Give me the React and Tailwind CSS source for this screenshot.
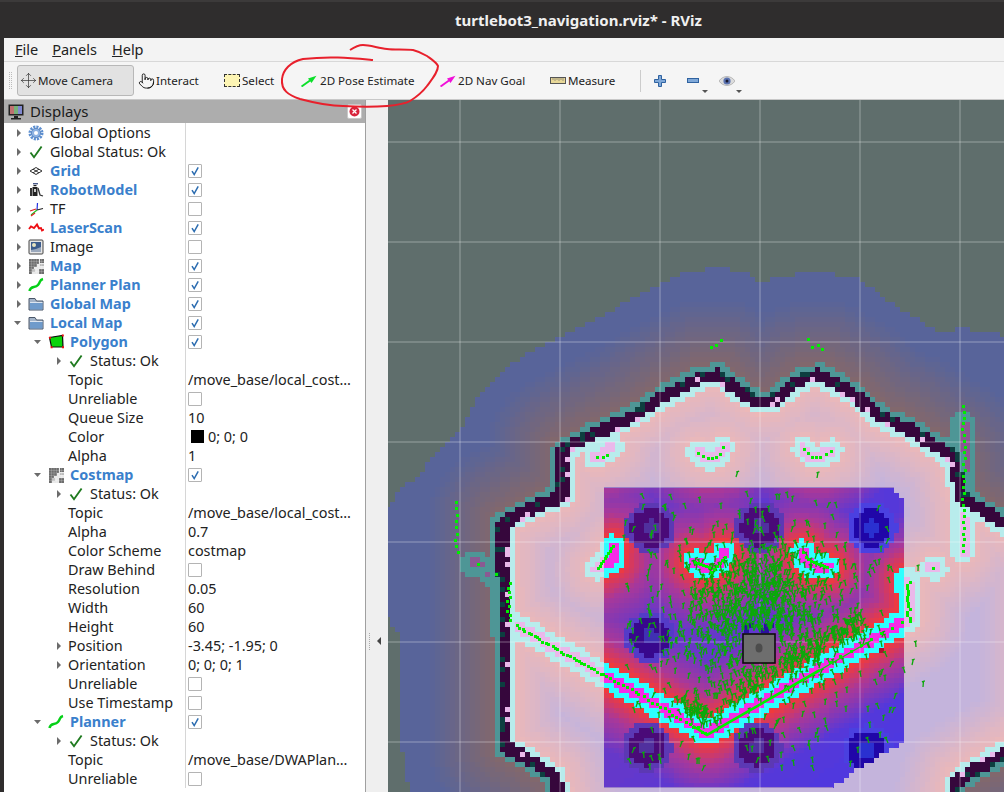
import React from "react";
import { Pointer, Move } from "lucide-react";

/* ---------- costmap drawing helpers ---------- */
const segD = (px, py, a, b) => {
  const dx = b[0] - a[0], dy = b[1] - a[1];
  const l = dx * dx + dy * dy;
  let t = l ? ((px - a[0]) * dx + (py - a[1]) * dy) / l : 0;
  t = Math.max(0, Math.min(1, t));
  return Math.hypot(px - a[0] - t * dx, py - a[1] - t * dy);
};
const lineD = (px, py, lines) => {
  let m = 1e9;
  for (const pl of lines) {
    if (pl.length === 1) m = Math.min(m, Math.hypot(px - pl[0][0], py - pl[0][1]));
    for (let i = 0; i + 1 < pl.length; i++) m = Math.min(m, segD(px, py, pl[i], pl[i + 1]));
  }
  return m;
};
const inPoly = (x, y, p) => {
  let c = false;
  for (let i = 0, j = p.length - 1; i < p.length; j = i++) {
    if (p[i][1] > y !== p[j][1] > y && x < ((p[j][0] - p[i][0]) * (y - p[i][1])) / (p[j][1] - p[i][1]) + p[i][0]) c = !c;
  }
  return c;
};
const hex = (h) => [1, 3, 5].map((i) => parseInt(h.slice(i, i + 2), 16));
const mix = (a, b, t) => {
  const A = hex(a), B = hex(b);
  const q = Math.round(Math.max(0, Math.min(1, t)) * 14) / 14;
  return "#" + A.map((v, i) => Math.round(v + (B[i] - v) * q).toString(16).padStart(2, "0")).join("");
};
const hash = (x, y) => {
  const s = Math.sin(x * 12.9898 + y * 78.233) * 43758.5453;
  return s - Math.floor(s);
};

const halo = [[388,505],[398,493],[421,472],[445,443],[461,430],[470,412],[480,393],[500,372],[529,352],[560,337],[600,317],[645,292],[685,272],[717,268],[749,272],[759,282],[781,277],[810,272],[824,273],[856,277],[891,302],[914,317],[940,332],[962,328],[995,333],[1004,337],[1100,400],[1100,830],[412,830],[410,785],[405,782],[405,755],[400,752],[400,632],[392,625],[388,617],[370,600],[370,540]];
const wallTop = [[558,792],[555,777],[525,757],[505,747],[503,523],[528,510],[545,502],[563,497],[563,450],[592,435],[632,417],[663,397],[702,377],[718,375],[734,387],[759,403],[771,402],[800,380],[820,375],[852,393],[880,417],[907,428],[930,443],[952,455],[962,498],[1004,523],[1040,545],[1040,730],[1004,753],[980,767],[958,780],[955,792]];
const room = [...wallTop, [945,840],[575,840]];
const walls = [[[575,840],[558,792]], wallTop, [[955,792],[945,840]]];
const obst = [
  [[596,457],[612,448]],
  [[698,453],[708,458],[716,457],[723,447]],
  [[804,449],[812,457],[820,457],[831,451]],
  [[473,564],[478,564]], [[492,574],[495,574]],
  [[963,425],[963,552]],
  [[931,568],[936,568]],
  [[613,547],[612,560],[597,568]],
  [[695,562],[705,568],[718,564],[724,553]],
  [[803,552],[808,565],[827,567]],
  [[907,580],[910,600],[909,620]],
  [[515,625],[707,733],[905,621]],
];
const posts = [[650,528,0],[760,527,0],[872,528,1],[650,637,.4],[647,747,0],[757,747,0],[867,750,1]];

const inLocal = (x, y) => {
  if (x < 604 || x >= 904 || y < 488 || y >= 787) return false;
  if (x > 894 && y < 493) return false;
  if (x > 899 && y < 498) return false;
  if (y > 742 && y < 772 && x > 904 - (y - 742) * 1.7) return false;
  if (y >= 772 && x > 853 - (y - 772) * 1.33) return false;
  return true;
};

const globalColor = (x, y) => {
  if (!inPoly(x, y, halo)) return null;
  const dw = lineD(x, y, walls), dob = lineD(x, y, obst), ins = inPoly(x, y, room), h = hash(x, y);
  if (dw < 6) {
    if (!ins && h < 0.22) return "#0d3f40";
    if (ins && h < 0.12) return "#eab8ea";
    return "#36073c";
  }
  if (dw < 11.5) return ins ? "#b8ecec" : "#4e9696";
  if (dob < 5.5) return ins ? "#eab8ea" : "#8a5a92";
  if (dob < 12) return ins ? "#b8ecec" : "#4e9696";
  if (ins) return mix("#ecb8b8", "#c4b4dc", (Math.min(dw, dob) - 10) / 50);
  return mix("#84686a", "#58649a", (dw - 8) / 70);
};

const localColor = (x, y) => {
  const d = lineD(x, y, obst);
  if (d < 5) return "#f52ce6";
  if (d < 12) return "#2effff";
  if (x > 866 && x < 882 && y > 628 && y < 652) return "#b0102c";
  if (y > 623 && y < 633 && x > 745 && x < 775 && hash(x, y) < 0.5) return "#2a10a0";
  for (const [px, py, b] of posts) {
    const r = Math.hypot(x - px, y - py);
    if (r < 8) return mix("#50309e", "#2a30d0", b);
    if (r < 19) return mix("#4a0a78", "#2006a8", b);
    if (r < 25) return mix("#5c38b4", "#4a40e0", b);
  }
  const base = mix("#7038c0", "#4e38e0", (x - 604) / 300 * 0.8 + Math.max(0, y - 680) / 300);
  if (d < 34) return mix("#f03a3c", "#a8389a", (d - 12) / 22);
  return mix("#a8389a", base, (d - 34) / 30);
};

const buildCells = () => {
  const groups = {};
  const add = (c, x, y, w, h) => {
    groups[c] = (groups[c] || "") + `M${x} ${y}h${w}v${h}h${-w}z`;
  };
  for (let y = 97; y < 795; y += 5) {
    for (let x = 385; x < 1005; x += 5) {
      const c = globalColor(x + 2.5, y + 2.5);
      if (c) add(c, x, y, 5, 5);
    }
  }
  for (let y = 488; y < 787; y += 5) {
    for (let x = 604; x < 904; x += 5) {
      if (inLocal(x + 2.5, y + 2.5)) add(localColor(x + 2.5, y + 2.5), x, y, 5, 5);
    }
  }
  return Object.entries(groups);
};

const buildParticles = () => {
  let s = 12345;
  const r = () => ((s = (s * 1664525 + 1013904223) >>> 0) / 4294967296);
  const g = () => (r() + r() + r() + r() - 2) * 1.22;
  const pts = [];
  for (let i = 0; i < 800; i++) pts.push([757 + g() * 58, 605 + g() * 46]);
  for (let i = 0; i < 260; i++) pts.push([760 + g() * 80, 645 + g() * 50]);
  for (let i = 0; i < 220; i++) { const t = r(); pts.push([715 + 150 * t + g() * 6, 722 - 85 * t - 14 + g() * 12]); }
  for (let i = 0; i < 70; i++) { const t = r(); pts.push([680 + 30 * t + g() * 8, 700 + 25 * t + g() * 6]); }
  for (let i = 0; i < 210; i++) pts.push([625 + r() * 265, 495 + r() * 280]);
  pts.push([736,477],[817,478],[916,647],[912,665],[905,673],[923,687],[894,699],[893,572],[918,571],[700,503],[748,497]);
  let d = "";
  for (const [x, y] of pts) {
    if (x > 740 && x < 778 && y > 632 && y < 666) continue;
    const a = (r() - 0.5) * 0.9;
    const dx = Math.sin(a) * 6, dy = -Math.cos(a) * 6;
    const X = Math.round(x), Y = Math.round(y);
    d += `M${X} ${Y}l${dx.toFixed(1)} ${dy.toFixed(1)}m-1.6 .8l3 -1`;
  }
  return d;
};

const buildDots = () => {
  let s = 99;
  const r = () => ((s = (s * 1664525 + 1013904223) >>> 0) / 4294967296);
  const pts = [[711,347],[716,345],[721,340],[808,339],[812,347],[818,345],[822,349],[478,564],[496,574],[597,457],[603,457],[607,455],[698,453],[703,456],[708,458],[712,458],[716,457],[720,454],[723,447],[804,449],[808,453],[812,457],[816,457],[820,457],[826,454],[831,451],[933,568]];
  for (let i = 0; i < 9; i++) pts.push([455 + r() * 3, 502 + i * 6.3]);
  for (let i = 0; i < 26; i++) pts.push([962 + r() * 3, 406 + i * 5.8]);
  for (let i = 0; i < 9; i++) pts.push([507 + r() * 3, 583 + i * 4.6]);
  for (let i = 0; i <= 30; i++) { const t = i / 30; pts.push([515 + 90 * t + r() * 2, 625 + 50 * t + r() * 2]); }
  for (let i = 0; i < 10; i++) { const t = i / 9; pts.push([613 - 15 * t, 546 + 22 * t]); }
  for (let i = 0; i < 14; i++) pts.push([906 + r() * 4, 582 + i * 3]);
  for (let i = 0; i <= 24; i++) { const t = i / 24; pts.push([605 + 100 * t + r() * 2, 675 + 57 * t + r() * 2]); }
  for (let i = 0; i < 12; i++) { const t = i / 11; pts.push([695 + 30 * t, 562 + (t < .5 ? 12 * t : 12 - 34 * (t - .5)) ]); }
  for (let i = 0; i < 10; i++) { const t = i / 9; pts.push([803 + 24 * t, 552 + 15 * Math.sqrt(t)]); }
  for (let i = 0; i < 8; i++) { const t = i / 7; pts.push([830 + 72 * t, 662 - 40 * t]); }
  return pts;
};

const cells = buildCells();
const particles = buildParticles();
const dots = buildDots();

const Canvas = () => (
  <svg viewBox="388 100 616 692" className="block w-[616px] h-[692px] shrink-0">
    <rect x="388" y="100" width="616" height="692" fill="#5f6e6c" />
    <g shapeRendering="crispEdges">
      {cells.map(([c, d]) => <path key={c} d={d} fill={c} />)}
      <rect x="604" y="487" width="290" height="1" fill="#9a80c8" />
      <rect x="604" y="787" width="229" height="1" fill="#9a80c8" />
    </g>
    <g stroke="#ffffff" strokeOpacity=".18" strokeWidth="2" shapeRendering="crispEdges">
      {[460, 560, 660, 760, 860, 960].map((x) => <line key={x} x1={x} x2={x} y1="100" y2="792" />)}
      {[142, 242, 342, 442, 542, 642, 742].map((y) => <line key={y} y1={y} y2={y} x1="388" x2="1004" />)}
    </g>
    <path d={particles} fill="none" stroke="#0aa80a" strokeWidth="1.3" />
    <path d="M693 726L707 735L820 670" fill="none" stroke="#00f000" strokeWidth="2.6" />
    <path d="M820 670L872 640" fill="none" stroke="#00e000" strokeWidth="1.4" />
    <g fill="#00ee00" shapeRendering="crispEdges">
      {dots.map(([x, y], i) => <rect key={i} x={Math.round(x) - 1} y={Math.round(y) - 1} width="3" height="3" />)}
    </g>
    <rect x="743" y="634" width="32" height="29" fill="#6e6e6e" stroke="#0c0c0c" strokeWidth="1.6" />
    <ellipse cx="759" cy="648" rx="3.5" ry="4.5" fill="#4c4c4c" />
  </svg>
);

/* ---------- tree icons ---------- */
const S = ({ children, c = "" }) => (
  <svg viewBox="0 0 16 16" className={`w-4 h-4 shrink-0 ${c}`}>{children}</svg>
);
const Gear = () => (
  <S>
    <circle cx="8" cy="8" r="6" fill="none" stroke="#5d8fd0" strokeWidth="3" strokeDasharray="2.1 1" />
    <circle cx="8" cy="8" r="4.6" fill="#8db2e2" stroke="#4c7cbc" strokeWidth=".8" />
    <circle cx="8" cy="8" r="2" fill="#fff" />
  </S>
);
const Check = () => (
  <svg viewBox="0 0 14 14" className="w-[14px] h-[14px] shrink-0">
    <path d="M1.5 7.5L5 12.2L12.6 1.5" fill="none" stroke="#1f7a1f" strokeWidth="1.9" />
  </svg>
);
const GridI = () => (
  <S><path d="M8 4.5L14 8L8 11.5L2 8Z M5 6.2L11 9.8M11 6.2L5 9.8" fill="#fff" stroke="#333" strokeWidth="1" /></S>
);
const Robot = () => (
  <S>
    <rect x="5" y="1" width="5" height="1.4" fill="#4a5a8a" />
    <rect x="5.5" y="3" width="3" height="1.2" fill="#222" />
    <rect x="2" y="6" width="2" height="8" fill="#333" />
    <rect x="4.5" y="5" width="5" height="9" fill="#222" />
    <rect x="6" y="7" width="2" height="3" fill="#ccc" />
    <path d="M10 6L12 13L15 14" fill="none" stroke="#333" strokeWidth="1.3" />
  </S>
);
const TF = () => (
  <S>
    <path d="M9 9L9.5 2" stroke="#2030e0" strokeWidth="1.2" />
    <path d="M9 9L15 7.5" stroke="#222" strokeWidth="1.2" />
    <path d="M9 9L3 14" stroke="#20c020" strokeWidth="1.2" />
    <path d="M8 8L2 10" stroke="#e02020" strokeWidth="1.2" />
    <path d="M3 15L7 12" stroke="#e02020" strokeWidth="1.2" />
  </S>
);
const Laser = () => (
  <S><path d="M1 9L3 6.5L6 8L9 4.5L11 8.5L13 8L14 10.5L16 9.5" fill="none" stroke="#ee0f14" strokeWidth="1.9" /></S>
);
const ImageI = () => (
  <S>
    <rect x="1" y="1" width="14" height="14" rx="1" fill="#e6e6e6" stroke="#444" />
    <rect x="3" y="3" width="10" height="10" fill="#3c5c8c" />
    <circle cx="6" cy="6" r="2" fill="#e8e4c0" />
    <path d="M3 13L3 11L8 10L13 8V13Z" fill="#9aa8bc" />
  </S>
);
const MapI = () => (
  <S>
    <rect x="1" y="1" width="15" height="15" fill="#e8e8e8" />
    <path d="M1 1h5v5h-5zM6 1h5v5h-5zM1 6h5v5h-5zM6 6h3v3h-3zM1 11h3v5h-3zM12 1h4v4h-4zM11 11h5v5h-5z" fill="#6e6e6e" />
    <path d="M12 6h4v2h-4zM4 11h3v3h-3z" fill="#bdbdbd" />
    <path d="M3.5 1v15M6 1v15M8.5 1v15M11 1v15M13.5 1v15M1 3.5h15M1 6h15M1 8.5h15M1 11h15M1 13.5h15" stroke="#fff" strokeOpacity=".45" strokeWidth=".4" />
  </S>
);
const Plan = () => (
  <S><path d="M1.5 14C2.5 8 7 11.5 10 8S11 3 15 2" fill="none" stroke="#06d018" strokeWidth="2.5" /></S>
);
const Folder = () => (
  <S>
    <path d="M1 14V2.5h6L8.5 5H15V14Z" fill="#a4b4c8" stroke="#4a5668" strokeWidth="1" />
    <rect x="2" y="6.5" width="12.5" height="7" fill="#6f9bcb" />
    <rect x="2" y="6" width="12.5" height="1" fill="#dde6f0" />
  </S>
);
const PolyI = () => (
  <S>
    <path d="M1.5 3.5L14.5 1.5L15 13L3.5 13Z" fill="#0ad40a" stroke="#0a0a0a" strokeWidth="1.2" />
    <path d="M1 2.8h2v2h-2zM13.8 .6h2v2h-2zM14 12.2h2v2h-2zM2.6 12.2h2v2h-2z" fill="#f01010" />
  </S>
);

const icons = { gear: Gear, check: Check, grid: GridI, robot: Robot, tf: TF, laser: Laser, image: ImageI, map: MapI, plan: Plan, folder: Folder, poly: PolyI };

const Arrow = ({ open }) =>
  open ? (
    <svg viewBox="0 0 7 4" className="w-[7px] h-[4px]"><path d="M0 0H7L3.5 4Z" fill="#6b6b6b" /></svg>
  ) : (
    <svg viewBox="0 0 4 8" className="w-[4px] h-[8px]"><path d="M0 0V8L4 4Z" fill="#6b6b6b" /></svg>
  );

const Box = ({ on }) => (
  <span className="flex w-[14px] h-[14px] shrink-0 items-center justify-center border border-[#b4b4b4] rounded-[1px] bg-white">
    {on ? (
      <svg viewBox="0 0 12 12" className="w-[12px] h-[12px]">
        <path d="M3 6.2L5.2 9.6L9.2 2.4" fill="none" stroke="#2b6cb0" strokeWidth="1.5" />
      </svg>
    ) : null}
  </span>
);

const rows = [
  { l: 0, a: "r", i: "gear", t: "Global Options" },
  { l: 0, a: "r", i: "check", t: "Global Status: Ok" },
  { l: 0, a: "r", i: "grid", t: "Grid", b: 1, c: 1 },
  { l: 0, a: "r", i: "robot", t: "RobotModel", b: 1, c: 1 },
  { l: 0, a: "r", i: "tf", t: "TF", c: 0 },
  { l: 0, a: "r", i: "laser", t: "LaserScan", b: 1, c: 1 },
  { l: 0, a: "r", i: "image", t: "Image", c: 0 },
  { l: 0, a: "r", i: "map", t: "Map", b: 1, c: 1 },
  { l: 0, a: "r", i: "plan", t: "Planner Plan", b: 1, c: 1 },
  { l: 0, a: "r", i: "folder", t: "Global Map", b: 1, c: 1 },
  { l: 0, a: "d", i: "folder", t: "Local Map", b: 1, c: 1 },
  { l: 1, a: "d", i: "poly", t: "Polygon", b: 1, c: 1 },
  { l: 2, a: "r", i: "check", t: "Status: Ok" },
  { l: 2, t: "Topic", v: "/move_base/local_cost…" },
  { l: 2, t: "Unreliable", c: 0 },
  { l: 2, t: "Queue Size", v: "10" },
  { l: 2, t: "Color", v: "0; 0; 0", sw: 1 },
  { l: 2, t: "Alpha", v: "1" },
  { l: 1, a: "d", i: "map", t: "Costmap", b: 1, c: 1 },
  { l: 2, a: "r", i: "check", t: "Status: Ok" },
  { l: 2, t: "Topic", v: "/move_base/local_cost…" },
  { l: 2, t: "Alpha", v: "0.7" },
  { l: 2, t: "Color Scheme", v: "costmap" },
  { l: 2, t: "Draw Behind", c: 0 },
  { l: 2, t: "Resolution", v: "0.05" },
  { l: 2, t: "Width", v: "60" },
  { l: 2, t: "Height", v: "60" },
  { l: 2, a: "r", t: "Position", v: "-3.45; -1.95; 0" },
  { l: 2, a: "r", t: "Orientation", v: "0; 0; 0; 1" },
  { l: 2, t: "Unreliable", c: 0 },
  { l: 2, t: "Use Timestamp", c: 0 },
  { l: 1, a: "d", i: "plan", t: "Planner", b: 1, c: 1 },
  { l: 2, a: "r", i: "check", t: "Status: Ok" },
  { l: 2, t: "Topic", v: "/move_base/DWAPlan…" },
  { l: 2, t: "Unreliable", c: 0 },
];
const indent = { 0: "w-[24px]", 1: "w-[44px]", 2: "w-[64px]" };

const Row = ({ r }) => {
  const I = r.i && icons[r.i];
  return (
    <div className="flex h-[19px] shrink-0 items-center">
      <div className="flex h-full w-[181px] shrink-0 items-center whitespace-nowrap">
        <span className={`flex ${indent[r.l]} shrink-0 justify-end pr-[7px]`}>
          {r.a ? <Arrow open={r.a === "d"} /> : null}
        </span>
        {I ? (
          <span className="flex w-4 mr-[6px] shrink-0 justify-center">
            <I />
          </span>
        ) : null}
        <span className={r.b ? "font-bold text-[#3a80cc]" : "text-[#222222]"}>{r.t}</span>
      </div>
      <div className="h-full w-px shrink-0 bg-[#d6d6d6]" />
      <div className="flex h-full min-w-0 flex-1 items-center pl-[2px] whitespace-nowrap text-[#222222]">
        {r.c !== undefined ? <Box on={r.c} /> : null}
        {r.sw ? <span className="ml-[3px] mr-[4px] h-[13px] w-[13px] shrink-0 bg-black" /> : null}
        {r.v}
      </div>
    </div>
  );
};

/* ---------- toolbar icons ---------- */
const Pose = ({ c }) => (
  <svg viewBox="0 0 16 12" className="w-4 h-3 shrink-0">
    <path d="M0.5 11.5L9 5.5" stroke={c} strokeWidth="2" />
    <path d="M15.5 .8L7 3.5L10.5 8Z" fill={c} />
  </svg>
);
const Caret = () => (
  <svg viewBox="0 0 6 3" className="w-[6px] h-[3px] self-end mb-[6px] shrink-0"><path d="M0 0H6L3 3Z" fill="#555" /></svg>
);
const Tb = ({ c, children }) => <span className={`${c} shrink-0 whitespace-nowrap`}>{children}</span>;

export default function App() {
  return (
    <div className="relative flex h-[792px] w-[1004px] flex-col overflow-hidden bg-[#2f2d2d] font-['Noto_Sans','Open_Sans',sans-serif]">
      <div className="flex h-[38px] shrink-0 items-center border-t-2 border-[#3c3a3a] bg-[#2f2d2d] pl-[455px] text-[15px] font-bold text-[#f0f0f0]">
        turtlebot3_navigation.rviz* - RViz
      </div>
      <div className="ml-1 flex h-[24px] shrink-0 items-center border-b border-[#d8d8d8] bg-[#f3f3f3] text-[14.5px] text-[#222222]">
        <span className="ml-[11px]"><u>F</u>ile</span>
        <span className="ml-[14px]"><u>P</u>anels</span>
        <span className="ml-[15px]"><u>H</u>elp</span>
      </div>
      <div className="ml-1 flex h-[38px] shrink-0 items-center border-b border-[#c8c8c8] bg-[#f5f5f5] text-[11.6px] text-[#222222]">
        <span className="ml-[5px] h-[17px] w-[3px] shrink-0 border-x border-dotted border-[#bbbbbb]" />
        <span className="ml-[5px] flex h-[31px] w-[117px] shrink-0 items-center rounded-[3px] border border-[#b8b8b8] bg-[#e2e2e2] pl-[2px]">
          <Move className="h-[17px] w-[17px] shrink-0 text-[#333333]" strokeWidth={1} />
          <span className="ml-[1px]">Move Camera</span>
        </span>
        <Pointer className="ml-[4px] h-[18px] w-[17px] shrink-0 text-[#111111]" strokeWidth={1.3} />
        <Tb c="ml-[1px] w-[43px]">Interact</Tb>
        <span className="ml-[25px] h-[13px] w-[16px] shrink-0 border border-dashed border-[#333333] bg-[#fdf5b4]" />
        <Tb c="ml-[2px] w-[33px]">Select</Tb>
        <span className="ml-[26px]"><Pose c="#0be02a" /></span>
        <Tb c="ml-[3px] w-[95px]">2D Pose Estimate</Tb>
        <span className="ml-[25px]"><Pose c="#f010d8" /></span>
        <Tb c="ml-[2px] w-[66px]">2D Nav Goal</Tb>
        <svg viewBox="0 0 16 7" className="ml-[26px] h-[7px] w-4 shrink-0">
          <rect x=".5" y=".5" width="15" height="6" fill="#e8d898" stroke="#555" />
          <path d="M3 1v2M5 1v3M7 1v2M9 1v3M11 1v2M13 1v3" stroke="#666" strokeWidth=".6" />
        </svg>
        <Tb c="ml-[2px] w-[46px]">Measure</Tb>
        <span className="ml-[26px] h-[22px] w-px shrink-0 bg-[#cccccc]" />
        <svg viewBox="0 0 12 12" className="ml-[13px] h-3 w-3 shrink-0">
          <path d="M4.5 .5h3v4h4v3h-4v4h-3v-4h-4v-3h4z" fill="#7fa8d8" stroke="#2f62a0" />
        </svg>
        <svg viewBox="0 0 12 5" className="ml-[21px] h-[5px] w-3 shrink-0">
          <rect x=".5" y=".5" width="11" height="4" fill="#7fa8d8" stroke="#2f62a0" />
        </svg>
        <span className="ml-[3px] flex self-stretch"><Caret /></span>
        <svg viewBox="0 0 16 10" className="ml-[11px] h-[10px] w-4 shrink-0">
          <path d="M0 5C4 -1 12 -1 16 5C12 11 4 11 0 5Z" fill="#dcdcdc" stroke="#9a9a9a" strokeWidth=".6" />
          <circle cx="8" cy="5" r="3.6" fill="#5a72b0" />
          <circle cx="8" cy="5" r="1.5" fill="#1a1a30" />
        </svg>
        <span className="ml-[1px] flex self-stretch"><Caret /></span>
      </div>
      <div className="ml-1 flex min-h-0 flex-1 bg-[#efefef]">
        <div className="flex w-[362px] shrink-0 flex-col overflow-hidden border-r border-[#a0a0a0] bg-white text-[14.4px] leading-[19px]">
          <div className="flex h-[23px] shrink-0 items-center bg-[#adadad] pl-[4px] pr-[3px] text-[15px] text-[#1a1a1a]">
            <svg viewBox="0 0 16 16" className="h-4 w-4 shrink-0">
              <rect x=".5" y=".5" width="15" height="11" fill="#222" />
              <rect x="2" y="2" width="4" height="8" fill="#c07070" />
              <rect x="6" y="2" width="4" height="8" fill="#78b078" />
              <rect x="10" y="2" width="4" height="8" fill="#8088d0" />
              <path d="M6 12h4v2h3v1.5H3V14h3z" fill="#222" />
            </svg>
            <span className="ml-[6px]">Displays</span>
            <span className="ml-auto flex h-[15px] w-[15px] items-center justify-center rounded-[2px] border border-[#c8c8c8] bg-white">
              <svg viewBox="0 0 11 11" className="h-[11px] w-[11px]">
                <circle cx="5.5" cy="5.5" r="5" fill="#d8243c" />
                <path d="M3.5 3.5L7.5 7.5M7.5 3.5L3.5 7.5" stroke="#fff" strokeWidth="1.3" />
              </svg>
            </span>
          </div>
          {rows.map((r, i) => <Row key={i} r={r} />)}
        </div>
        <div className="flex w-[22px] shrink-0 items-start gap-[5px] bg-[#efefef] pl-[3px] pt-[533px]">
          <span className="h-[17px] w-px border-l border-dotted border-[#aaaaaa]" />
          <svg viewBox="0 0 4 8" className="mt-[4px] ml-[2px] h-2 w-1"><path d="M4 0V8L0 4Z" fill="#444" /></svg>
        </div>
        <Canvas />
      </div>
      <svg viewBox="0 0 1004 792" className="absolute left-0 top-0 h-[792px] w-[1004px] pointer-events-none">
        <path d="M373 60C350 58 330 56 303 59C290 62 283 70 282 79C281 90 288 95 300 99C315 103 330 106 343 106C360 107 375 107 387 106C398 105 405 104 410 101C418 96 424 90 427 86C433 78 438 72 438 66C436 62 431 59 427 56C422 53 417 51 413 50C403 49 395 50 387 49C378 48 370 45 363 45C358 45 353 48 350 50" fill="none" stroke="#e8202c" strokeWidth="2" />
      </svg>
    </div>
  );
}
